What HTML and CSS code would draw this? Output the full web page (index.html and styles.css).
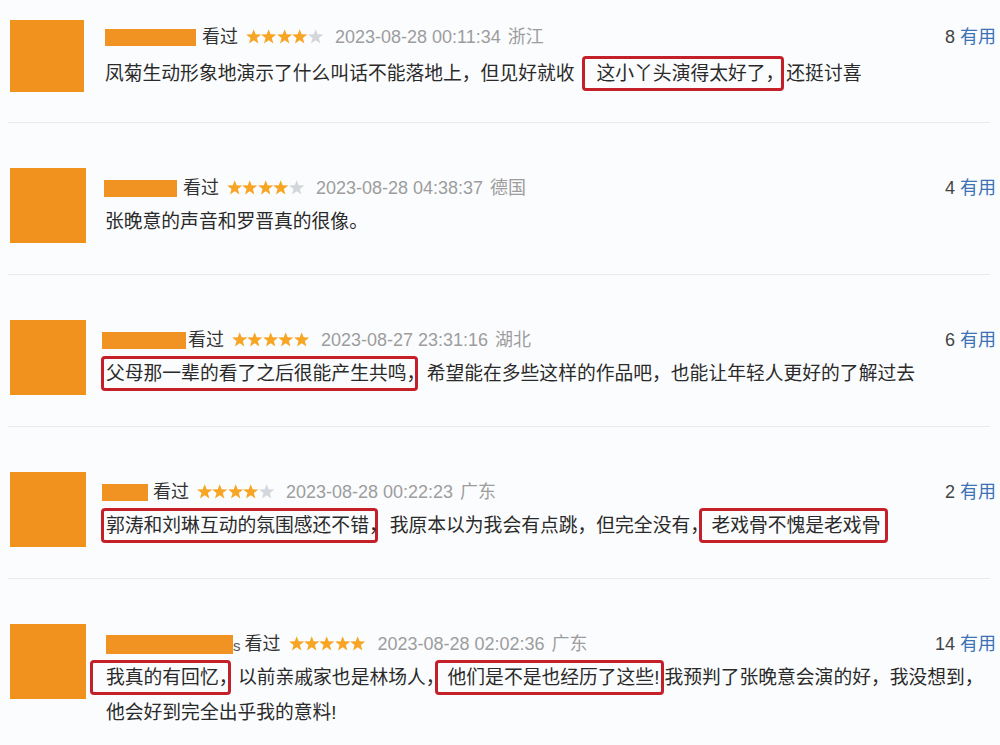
FILE: index.html
```html
<!DOCTYPE html>
<html lang="zh-CN">
<head>
<meta charset="utf-8">
<title>短评</title>
<link rel="stylesheet" href="styles.css">
</head>
<body>
<svg class="defs" width="0" height="0" aria-hidden="true">
  <symbol id="star" viewBox="0 0 15.4 15">
    <polygon points="7.7,0.2 9.64,5.33 15.31,5.53 10.84,9.02 12.4,14.6 7.7,11.3 3.0,14.6 4.56,9.02 0.09,5.53 5.76,5.33"/>
  </symbol>
</svg>
<div class="list">

  <div class="review review-first">
    <div class="avatar avatar-first"></div>
    <div class="body">
      <div class="head">
        <div class="meta">
          <span class="name name-1"></span>
          <span class="watched">看过</span>
          <span class="stars">
            <svg class="star on"><use href="#star"/></svg><svg class="star on"><use href="#star"/></svg><svg class="star on"><use href="#star"/></svg><svg class="star on"><use href="#star"/></svg><svg class="star off"><use href="#star"/></svg>
          </span>
          <span class="date">2023-08-28 00:11:34</span>
          <span class="loc">浙江</span>
        </div>
        <div class="useful"><span class="count">8</span><span class="label">有用</span></div>
      </div>
      <p class="text">凤菊生动形象地演示了什么叫话不能落地上，但见好就收<span class="mark mark-1">这小丫头演得太好了<span class="cut cut-1">，</span></span>还挺讨喜</p>
    </div>
  </div>

  <div class="review">
    <div class="avatar"></div>
    <div class="body">
      <div class="head">
        <div class="meta">
          <span class="name name-2"></span>
          <span class="watched">看过</span>
          <span class="stars">
            <svg class="star on"><use href="#star"/></svg><svg class="star on"><use href="#star"/></svg><svg class="star on"><use href="#star"/></svg><svg class="star on"><use href="#star"/></svg><svg class="star off"><use href="#star"/></svg>
          </span>
          <span class="date">2023-08-28 04:38:37</span>
          <span class="loc">德国</span>
        </div>
        <div class="useful"><span class="count">4</span><span class="label">有用</span></div>
      </div>
      <p class="text text-2">张晚意的声音和罗晋真的很像。</p>
    </div>
  </div>

  <div class="review">
    <div class="avatar"></div>
    <div class="body">
      <div class="head">
        <div class="meta">
          <span class="name name-3"></span>
          <span class="watched">看过</span>
          <span class="stars">
            <svg class="star on"><use href="#star"/></svg><svg class="star on"><use href="#star"/></svg><svg class="star on"><use href="#star"/></svg><svg class="star on"><use href="#star"/></svg><svg class="star on"><use href="#star"/></svg>
          </span>
          <span class="date">2023-08-27 23:31:16</span>
          <span class="loc">湖北</span>
        </div>
        <div class="useful"><span class="count">6</span><span class="label">有用</span></div>
      </div>
      <p class="text"><span class="mark mark-3">父母那一辈的看了之后很能产生共鸣<span class="cut cut-3">，</span></span>希望能在多些这样的作品吧，也能让年轻人更好的了解过去</p>
    </div>
  </div>

  <div class="review">
    <div class="avatar"></div>
    <div class="body">
      <div class="head">
        <div class="meta">
          <span class="name name-4"></span>
          <span class="watched">看过</span>
          <span class="stars">
            <svg class="star on"><use href="#star"/></svg><svg class="star on"><use href="#star"/></svg><svg class="star on"><use href="#star"/></svg><svg class="star on"><use href="#star"/></svg><svg class="star off"><use href="#star"/></svg>
          </span>
          <span class="date">2023-08-28 00:22:23</span>
          <span class="loc">广东</span>
        </div>
        <div class="useful"><span class="count">2</span><span class="label">有用</span></div>
      </div>
      <p class="text"><span class="mark mark-4a">郭涛和刘琳互动的氛围感还不错<span class="cut cut-4">，</span></span>我原本以为我会有点跳，但完全没有，<span class="mark mark-4b">老戏骨不愧是老戏骨</span></p>
    </div>
  </div>

  <div class="review review-last">
    <div class="avatar"></div>
    <div class="body">
      <div class="head">
        <div class="meta">
          <span class="name name-5"></span><span class="name-tail">s</span>
          <span class="watched">看过</span>
          <span class="stars">
            <svg class="star on"><use href="#star"/></svg><svg class="star on"><use href="#star"/></svg><svg class="star on"><use href="#star"/></svg><svg class="star on"><use href="#star"/></svg><svg class="star on"><use href="#star"/></svg>
          </span>
          <span class="date">2023-08-28 02:02:36</span>
          <span class="loc">广东</span>
        </div>
        <div class="useful"><span class="count">14</span><span class="label">有用</span></div>
      </div>
      <p class="text"><span class="mark mark-5a">我真的有回忆<span class="cut cut-5">，</span></span>以前亲戚家也是林场人，<span class="mark mark-5b">他们是不是也经历了这些!</span>我预判了张晚意会演的好，我没想到，<br>他会好到完全出乎我的意料!</p>
    </div>
  </div>

</div>
</body>
</html>
```

FILE: styles.css
```css
* {
  box-sizing: border-box;
}

html, body {
  margin: 0;
  padding: 0;
  background: #fbfcfd;
}

body {
  width: 1000px;
  height: 745px;
  overflow: hidden;
  font-family: "Liberation Sans", "Noto Sans CJK SC", sans-serif;
  color: #2b2b2b;
}

.defs {
  display: block;
  width: 0;
  height: 0;
  overflow: hidden;
}

.list {
  display: flex;
  flex-direction: column;
}

.review {
  display: flex;
  align-items: flex-start;
  margin: 0 10px 0 8px;
  padding: 45px 0 31px 2px;
  border-bottom: 1px solid #e7eaee;
}

.review-first {
  padding-top: 20px;
  padding-bottom: 30px;
}

.review-last {
  border-bottom: none;
}

.avatar {
  flex: none;
  width: 76px;
  height: 75px;
  background: #f1921f;
}

.avatar-first {
  width: 74px;
  height: 72px;
}

.body {
  flex: 1;
  min-width: 0;
  padding: 6px 0 0 20px;
  margin-right: -6px;
}

.review-first .body {
  padding-left: 21px;
  padding-top: 3px;
}

.head {
  height: 28px;
  display: flex;
  align-items: center;
  justify-content: space-between;
  font-size: 18px;
  line-height: 28px;
  white-space: nowrap;
}

.meta {
  display: flex;
  align-items: center;
}

.name {
  display: block;
  height: 17px;
  background: #f19322;
  margin-right: 6px;
}

.name-1 { width: 91px; }
.name-2 { width: 73px; margin-left: -2px; }
.name-3 { width: 84px; margin-left: -4px; margin-right: 2px; }
.name-4 { width: 46px; margin-left: -4px; margin-right: 5px; }
.name-5 { width: 127px; height: 19px; margin-right: 0; }

.name-tail {
  color: #555;
  font-size: 15px;
  margin-right: 4px;
  margin-top: 4px;
}

.watched {
  color: #333;
  margin-right: 8px;
}

.stars {
  display: flex;
  align-items: center;
  margin-right: 12px;
  margin-top: -1px;
}

.star {
  display: block;
  width: 15.4px;
  height: 15px;
  fill: currentColor;
}

.star.on {
  color: #f7a525;
}

.star.off {
  color: #d3d6da;
}

.date {
  color: #9d9d9d;
  margin-right: 7px;
}

.loc {
  color: #9d9d9d;
}

.useful {
  display: flex;
  align-items: center;
}

.count {
  color: #444;
  margin-right: 5px;
}

.label {
  color: #3c72b6;
}

.text {
  margin: 2px 0 0;
  font-size: 18.8px;
  line-height: 35px;
  color: #2a2a2a;
  white-space: nowrap;
}

.review-first .text {
  margin-top: 5px;
}

.text-2 {
  margin-left: -1px;
}

.mark {
  border: 3px solid #c42029;
  border-radius: 4px;
  padding: 4px 0;
}

.cut {
  padding: 0;
}

.mark-1 {
  margin-left: 7px;
  padding-left: 12px;
  margin-right: 2px;
}

.cut-1 { margin-right: -3px; }

.mark-3 {
  margin-left: -5px;
  padding-left: 2px;
  margin-right: 9px;
}

.cut-3 { margin-right: -10.6px; }

.mark-4a {
  margin-left: -5px;
  padding-left: 2px;
  margin-right: 12px;
}

.cut-4 { margin-right: -13px; }

.mark-4b {
  margin-left: -9.6px;
  padding-left: 9px;
  padding-right: 5px;
}

.mark-5a {
  margin-left: -16px;
  padding-left: 13px;
  margin-right: 6.5px;
}

.cut-5 { margin-right: -9px; }

.mark-5b {
  margin-left: -10px;
  padding-left: 10px;
  padding-right: 2px;
}
```
